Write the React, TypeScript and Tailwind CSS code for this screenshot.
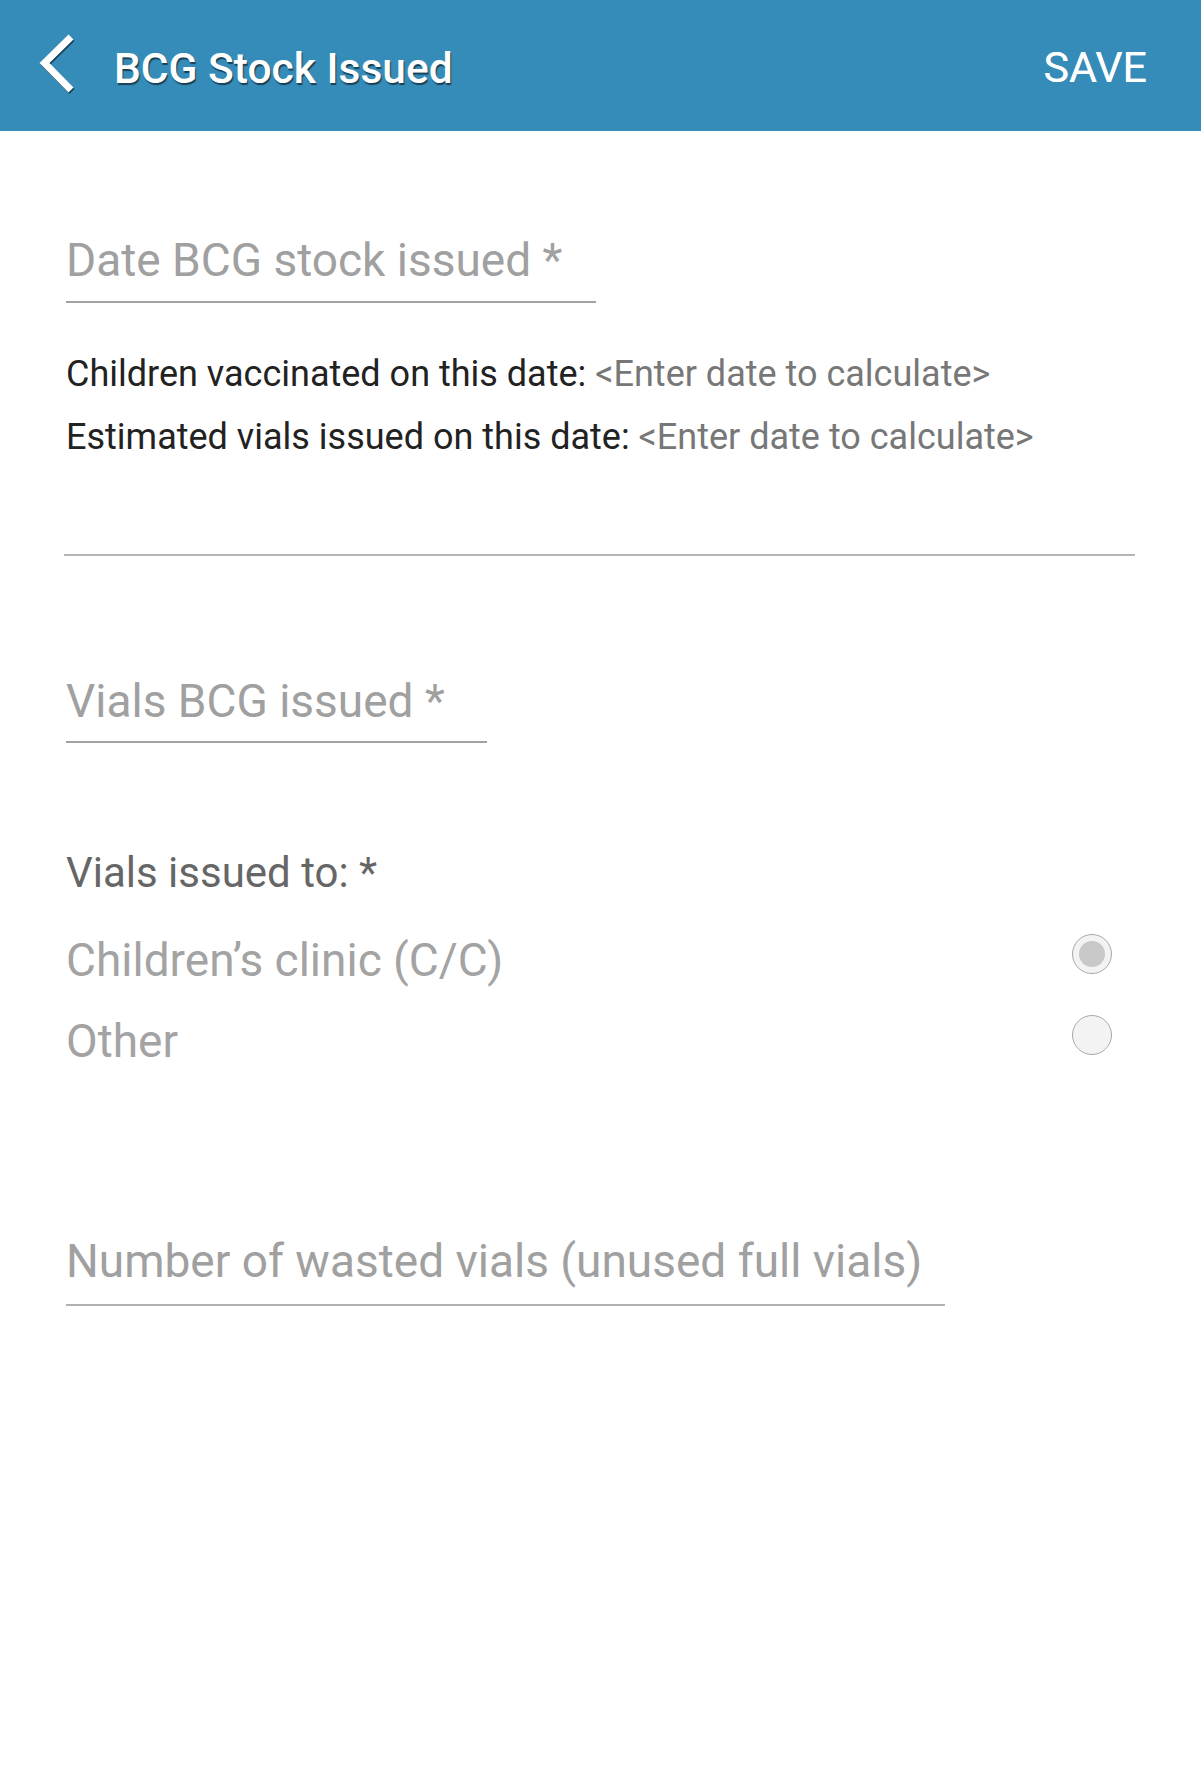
import React from "react";

function Radio({ checked }: { checked?: boolean }) {
  return (
    <div className="mt-[1px] flex h-[40px] w-[40px] shrink-0 items-center justify-center rounded-full border-[1.5px] border-[#a9a9a9] bg-[#f3f3f3]">
      {checked ? <div className="h-[26px] w-[26px] rounded-full bg-[#c8c8c8]" /> : null}
    </div>
  );
}

export default function App() {
  return (
    <div className="min-h-[1767px] w-full bg-white font-['Roboto',sans-serif]">
      <header className="flex h-[131px] items-start justify-between bg-[#368cb9]">
        <div className="flex items-start">
          <svg
            className="ml-[32px] mt-[29px]"
            width="48"
            height="70"
            viewBox="0 0 48 70"
            fill="none"
          >
            <polyline
              points="40,9.5 13.5,35.5 40,62.5"
              stroke="rgba(0,0,0,0.55)"
              strokeWidth="7"
              strokeLinejoin="miter"
            />
            <polyline
              points="39,8 12.5,34 39,61"
              stroke="#ffffff"
              strokeWidth="7"
              strokeLinejoin="miter"
            />
          </svg>
          <div className="ml-[34px] mt-[44px] text-[42.5px] font-medium leading-[50px] text-white [text-shadow:1px_2px_1px_rgba(0,0,0,0.55)]">
            BCG Stock Issued
          </div>
        </div>
        <div className="mr-[54px] mt-[42px] text-[43px] leading-[50px] text-white [text-shadow:0px_0px_0.5px_rgba(255,255,255,0.8)]">
          SAVE
        </div>
      </header>

      <main className="flex flex-col pl-[66px] pr-[66px]">
        <div className="mt-[102px] w-[530px] border-b-2 border-[#a2a2a2] pb-[14px] text-[46px] leading-[54px] text-[#a0a0a0]">
          Date BCG stock issued *
        </div>

        <div className="mt-[40px] text-[36px] leading-[63px] text-[#222222]">
          <div>
            Children vaccinated on this date:{" "}
            <span className="text-[#777777]">&lt;Enter date to calculate&gt;</span>
          </div>
          <div>
            Estimated vials issued on this date:{" "}
            <span className="text-[#777777]">&lt;Enter date to calculate&gt;</span>
          </div>
        </div>

        <div className="-ml-[2px] mt-[85px] h-[2px] bg-[#b4b4b4]" />

        <div className="mt-[118px] w-[421px] border-b-2 border-[#a2a2a2] pb-[13px] text-[46px] leading-[54px] text-[#a0a0a0]">
          Vials BCG issued *
        </div>

        <div className="mt-[105px] text-[42px] leading-[50px] text-[#666666]">Vials issued to: *</div>

        <div className="mt-[35px] flex items-start justify-between pr-[23px]">
          <div className="text-[46px] leading-[54px] text-[#a3a3a3]">Children’s clinic (C/C)</div>
          <Radio checked />
        </div>
        <div className="mt-[27px] flex items-start justify-between pr-[23px]">
          <div className="text-[46px] leading-[54px] text-[#a3a3a3]">Other</div>
          <Radio />
        </div>

        <div className="mt-[166px] w-[879px] border-b-2 border-[#b0b0b0] pb-[16px] text-[46px] leading-[54px] text-[#a0a0a0]">
          Number of wasted vials (unused full vials)
        </div>
      </main>
    </div>
  );
}
